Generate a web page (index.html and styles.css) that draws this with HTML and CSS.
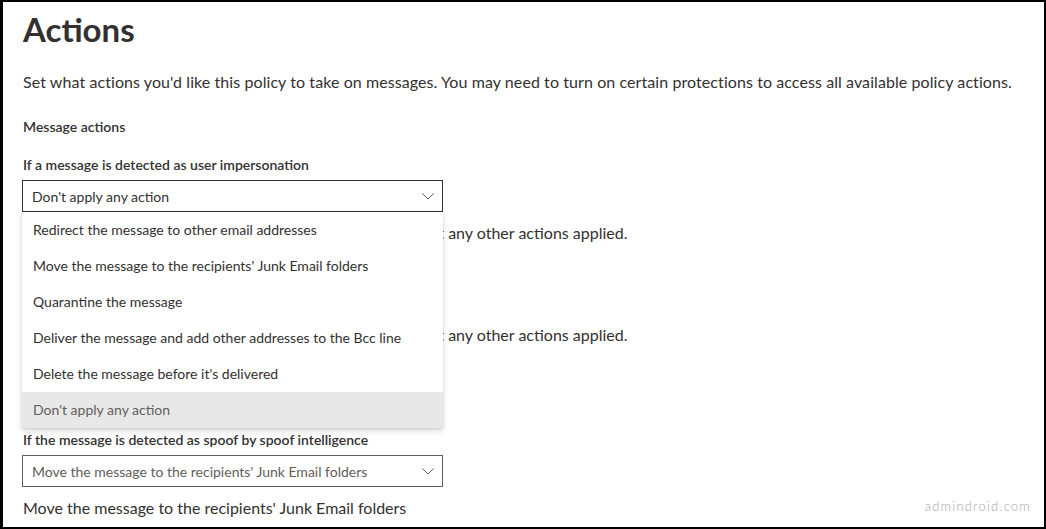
FILE: index.html
```html
<!DOCTYPE html>
<html lang="en">
<head>
  <meta charset="UTF-8">
  <meta name="viewport" content="width=device-width, initial-scale=1.0">
  <title>Actions</title>
  <link rel="stylesheet" href="styles.css">
</head>
<body>
  <div class="frame">
    <h1 class="title">Actions</h1>
    <p class="intro">Set what actions you'd like this policy to take on messages. You may need to turn on certain protections to access all available policy actions.</p>
    <h3 class="group">Message actions</h3>

    <div class="field field_1">
      <label class="label">If a message is detected as user impersonation</label>
      <div class="select-wrap">
        <div class="select open">
          <span class="value">Don't apply any action</span>
          <svg class="chevron" width="12" height="12" viewBox="0 0 12 12"><path d="M0.5 3.5 L6 9 L11.5 3.5" fill="none" stroke="#605e5c" stroke-width="1"/></svg>
        </div>
        <ul class="menu">
          <li>Redirect the message to other email addresses</li>
          <li>Move the message to the recipients' Junk Email folders</li>
          <li>Quarantine the message</li>
          <li>Deliver the message and add other addresses to the Bcc line</li>
          <li>Delete the message before it's delivered</li>
          <li class="selected">Don't apply any action</li>
        </ul>
      </div>
      <p class="desc">The message will be delivered to the recipient inbox without any other actions applied.</p>
    </div>

    <div class="field field_2">
      <label class="label">If a message is detected as domain impersonation</label>
      <div class="select-wrap">
        <div class="select">
          <span class="value">Don't apply any action</span>
          <svg class="chevron" width="12" height="12" viewBox="0 0 12 12"><path d="M0.5 3.5 L6 9 L11.5 3.5" fill="none" stroke="#605e5c" stroke-width="1"/></svg>
        </div>
      </div>
      <p class="desc">The message will be delivered to the recipient inbox without any other actions applied.</p>
    </div>

    <div class="field field_3">
      <label class="label">If Mailbox Intelligence detects an impersonated user</label>
      <div class="select-wrap">
        <div class="select">
          <span class="value">Don't apply any action</span>
          <svg class="chevron" width="12" height="12" viewBox="0 0 12 12"><path d="M0.5 3.5 L6 9 L11.5 3.5" fill="none" stroke="#605e5c" stroke-width="1"/></svg>
        </div>
      </div>
    </div>

    <div class="field field_4">
      <label class="label">If the message is detected as spoof by spoof intelligence</label>
      <div class="select-wrap">
        <div class="select">
          <span class="value muted">Move the message to the recipients' Junk Email folders</span>
          <svg class="chevron" width="12" height="12" viewBox="0 0 12 12"><path d="M0.5 3.5 L6 9 L11.5 3.5" fill="none" stroke="#605e5c" stroke-width="1"/></svg>
        </div>
      </div>
      <p class="desc">Move the message to the recipients' Junk Email folders</p>
    </div>

    <div class="watermark">admindroid.com</div>
  </div>
</body>
</html>
```

FILE: styles.css
```css
* {
  margin: 0;
  padding: 0;
  box-sizing: border-box;
}

html,
body {
  width: 100%;
  height: 100%;
  overflow: hidden;
  background-color: #fff;
}

body {
  font-family: Lato, "Segoe UI", sans-serif;
  color: #323130;
}

.frame {
  position: relative;
  width: 1046px;
  height: 529px;
  border: 2px solid #000;
  border-left-width: 3px;
  padding-left: 19px;
  overflow: hidden;
}

.title {
  margin-top: 7px;
  padding-left: 1px;
  font-size: 33px;
  line-height: 40px;
  font-weight: 700;
}

.intro {
  margin-top: 22px;
  padding-left: 1px;
  font-size: 16px;
  line-height: 22px;
  letter-spacing: .08px;
}

.group {
  margin-top: 24px;
  padding-left: 1px;
  font-size: 14px;
  line-height: 20px;
  font-weight: 600;
}

.field {
  width: 1000px;
}

.field_1 {
  margin-top: 18px;
}

.field_2,
.field_3 {
  margin-top: 13px;
}

.field_4 {
  margin-top: 14px;
}

.label {
  display: block;
  padding-left: 1px;
  font-size: 14px;
  line-height: 20px;
  font-weight: 600;
}

.select-wrap {
  position: relative;
  width: 421px;
  margin-top: 5px;
}

.select {
  display: flex;
  align-items: center;
  justify-content: space-between;
  height: 32px;
  padding: 0 8px 0 9px;
  border: 1px solid #605e5c;
  font-size: 14px;
}

.select.open {
  border-color: #323130;
}

.value.muted {
  color: #605e5c;
}

.desc {
  margin-top: 10px;
  padding-left: 1px;
  font-size: 16px;
  line-height: 22px;
}

.menu {
  position: absolute;
  left: 0;
  top: 100%;
  width: 421px;
  list-style: none;
  background-color: #fff;
  box-shadow: 0 3px 7px rgba(0,0,0,.13), 0 1px 2px rgba(0,0,0,.11);
  z-index: 10;
}

.menu>li {
  height: 36px;
  line-height: 36px;
  padding-left: 11px;
  font-size: 14px;
}

.menu>li.selected {
  background-color: #e8e8e8;
  color: #605e5c;
}

.watermark {
  position: absolute;
  right: 13px;
  bottom: 13px;
  font-size: 13px;
  letter-spacing: 1.2px;
  color: #a8a8a8;
  font-weight: 300;
}
```
